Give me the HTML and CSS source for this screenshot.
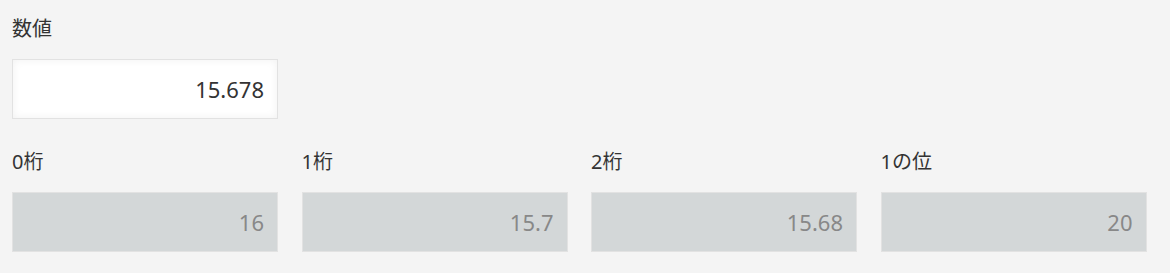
FILE: index.html
```
<!DOCTYPE html>
<html lang="ja">
<head>
    <meta charset="UTF-8">
    <title>数値の丸め</title>
    <link rel="stylesheet" href="styles.css">
</head>
<body>
    <div class="field">
        <label class="field-label" for="num">数値</label>
        <input id="num" class="num-input" type="text" value="15.678">
    </div>
    <div class="result-row">
        <div class="field">
            <label class="field-label">0桁</label>
            <input class="num-input result" type="text" value="16" readonly>
        </div>
        <div class="field">
            <label class="field-label">1桁</label>
            <input class="num-input result" type="text" value="15.7" readonly>
        </div>
        <div class="field">
            <label class="field-label">2桁</label>
            <input class="num-input result" type="text" value="15.68" readonly>
        </div>
        <div class="field">
            <label class="field-label">1の位</label>
            <input class="num-input result" type="text" value="20" readonly>
        </div>
    </div>
</body>
</html>
```

FILE: styles.css
```
body {
    margin: 0;
    padding: 14px 0 0 12px;
    background-color: #f4f4f4;
    font-family: "Noto Sans", "Noto Sans CJK JP", sans-serif;
    color: #333;
}
.field {
    display: flex;
    flex-direction: column;
}
.field-label {
    font-size: 20px;
    line-height: 30px;
    margin-bottom: 15px;
}
.num-input {
    box-sizing: border-box;
    width: 266px;
    height: 60px;
    padding: 0 13px;
    border: 1px solid #e2e2e2;
    background-color: #fff;
    box-shadow: inset 0 0 8px rgba(0, 0, 0, 0.06);
    font-family: "Noto Sans", "Noto Sans CJK JP", sans-serif;
    font-size: 22px;
    color: #333;
    text-align: right;
    outline: none;
}
.result-row {
    display: grid;
    grid-template-columns: repeat(4, 289.5px);
    margin-top: 28px;
}
.num-input.result {
    background-color: #d3d7d8;
    box-shadow: none;
    color: #888;
}
```
